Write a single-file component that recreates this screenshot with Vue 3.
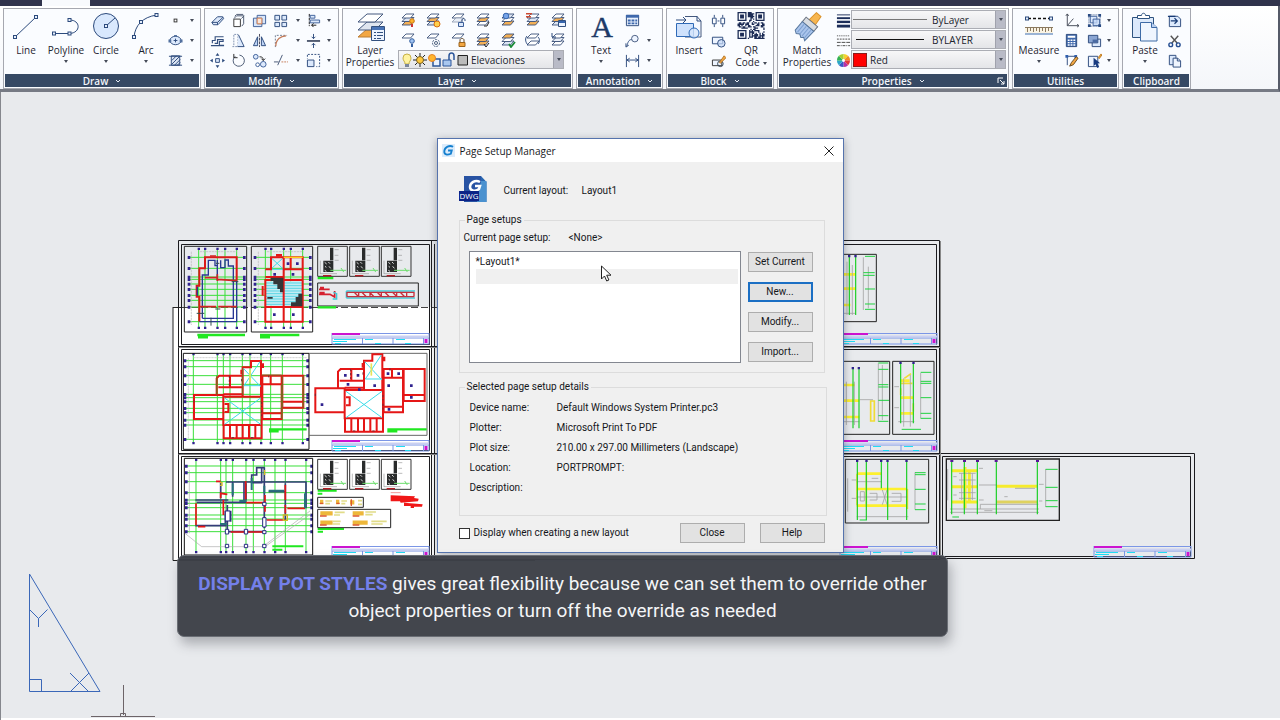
<script setup>
import { ref } from 'vue'

const N = 'stroke="#2c4a7c" fill="none"'
const sq = (x, y) => `<rect x="${x - 1.5}" y="${y - 1.5}" width="3" height="3" fill="#e6effc" stroke="#2c4a7c"/>`
const sheet = (y, fill, s = '#3a5078') => `<path d="M2 ${y + 4}L6 ${y}H14L10.500 ${y + 4}Z" fill="${fill}" stroke="${s}" stroke-width=".9"/>`
const stack = (a, b, c) => sheet(9, c) + sheet(5.5, b) + sheet(2, a)

const qr = (() => {
  let d = ''
  const finder = (x, y) => `M${x} ${y}h7v7h-7zM${x + 1} ${y + 1}v5h5v-5zM${x + 2} ${y + 2}h3v3h-3z`
  for (let y = 0; y < 21; y++) for (let x = 0; x < 21; x++) {
    const inFinder = (x < 8 && y < 8) || (x > 12 && y < 8) || (x < 8 && y > 12)
    if (!inFinder && (x * 7 + y * 11 + ((x * y) % 5) * 3 + (x ^ y)) % 7 < 4) d += `M${x} ${y}h1v1h-1z`
  }
  return `<g transform="translate(1.500 0) scale(1.290)"><path fill="#1c2c55" fill-rule="evenodd" d="${d}${finder(0, 0)}${finder(14, 0)}${finder(0, 14)}"/></g>`
})()

const icons = {
  line: `<path d="M4 25L25 5" ${N}/>${sq(4, 25)}${sq(25, 5)}`,
  polyline: `<path d="M3 21.500H18.500C30 21 30 8 18.500 8" ${N}/>${sq(3, 21.5)}${sq(18.5, 21.5)}${sq(18.5, 8)}`,
  circle: `<circle cx="15" cy="14" r="12.500" fill="#d9e8fd" stroke="#2c4a7c"/><path d="M15 14L24 6" ${N}/>${sq(15, 14)}`,
  arc: `<path d="M3 25C4 14 11 5 26 3" ${N}/>${sq(3, 25)}${sq(10, 10)}${sq(25.5, 3)}`,
  point: `<rect x="6.500" y="6.500" width="3" height="3" fill="#fff" stroke="#333"/>`,
  ellipse: `<ellipse cx="8" cy="8" rx="6" ry="4.500" fill="#dce9fc" stroke="#2c4a7c"/><path d="M8 6v4M6 8h4" ${N}/><path d="M.5 7h3v3h-3zM12.500 7h3v3h-3zM6.500 2h3v2h-3z" fill="#53719f"/>`,
  hatch: `<path d="M3.500 3h9v10h-9z" fill="#dce5f4" stroke="#2c4a7c"/><path d="M4 8l5-5M4 12l9-9M7 13l6-6M10 13l3-3M1 3.500h14M1 13h14" ${N}/>`,
  eraser: `<path d="M2 10L8 4h5.500l1 2-6 6.500H3.500z" fill="#dce8fa" stroke="#2c4a7c"/><path d="M2 10h6L14 4.500M8 10v2.500" ${N}/>`,
  copy3d: `<path d="M3 6.500h7v8H3z" fill="#fff" stroke="#333"/><path d="M3 6l3-3h8l-3 3M13.500 3.500v8l-2 2.500M4 3.500l2-2h7" stroke="#4b5870" fill="none"/>`,
  overlap: `<path d="M5.500 2.500h9v9h-9zM1.500 5.500h9v9h-9z" fill="#c9dbf7" fill-opacity=".7" stroke="#3d5f99"/><path d="M5.500 5.500h5v6h-5z" fill="#f8e8de" stroke="#d9804d"/>`,
  array: `<path d="M2 2.500h5v5H2zM9.500 2.500h5v5h-5zM2 10h5v4.500H2zM9.500 10h5v4.500h-5z" fill="#dce9fc" stroke="#2c4a7c"/>`,
  align: `<path d="M3.500 1v13" stroke="#111" stroke-dasharray="3 1"/><path d="M4.500 2.500h5v3h-5zM4.500 7.500h10v3h-10z" fill="#dce9fc" stroke="#3d5f99"/><path d="M6 13h5M8 11l-2 2 2 2" stroke="#111" fill="none"/>`,
  offset: `<path d="M1 13.500h14M2.500 11v-3h3v-4h9M5 11h3V7h6v2h-4v4h5" fill="none" stroke="#344f7e" stroke-width="1.200"/>`,
  stretch: `<path d="M3 2v12M1.500 14.500h6v-13h-5" fill="none" stroke="#7d8faf" stroke-dasharray="2 1"/><path d="M8 2l6 12.500H7" fill="#dce9fc" stroke="#2c4a7c"/>`,
  mirror: `<path d="M8 1v14" stroke="#445" stroke-dasharray="3 1"/><path d="M6 4v9.500H1.500zM10 4v9.500h4.500z" fill="#bed4f6" stroke="#2c4a7c"/>`,
  fillet: `<path d="M2.500 15V2.500H15" stroke="#69758c" stroke-dasharray="2 1.500" fill="none"/><path d="M3 14C3 7 8 3 14 3" stroke="#c57b58" fill="none" stroke-width="1.300"/>`,
  breakp: `<path d="M1 8.500h14" stroke="#15233f" stroke-width="1.500"/><path d="M8 1v5M8 11v5M6 4l2 2 2-2M6 13l2-2 2 2" ${N}/>`,
  move: `<path d="M6 6h4v4H6z" fill="#dce9fc" stroke="#2c4a7c"/><path d="M8 0l2 3H6zM8 16l2-3H6zM0 8l3-2v4zM16 8l-3-2v4z" fill="#2c4a7c"/>`,
  rotate: `<path d="M4.500 3.500A6 6 0 1 0 9 2.200" stroke="#46556f" fill="none"/><path d="M3 1v4h4" stroke="#222" fill="none"/>`,
  transform: `<circle cx="4" cy="4" r="2.500" fill="#dce9fc" stroke="#3d5f99"/><circle cx="12" cy="12" r="3" fill="#dce9fc" stroke="#3d5f99"/><circle cx="6" cy="12.500" r="2" fill="#fff" stroke="#3d5f99"/><path d="M8 4c3 0 4 1 4 4M10 6l2 2 2-2" fill="none" stroke="#222"/>`,
  trim: `<path d="M1 9.500h5M5 13l5-11" stroke="#445574" fill="none"/><path d="M9 9.500h7" stroke="#c57b58" stroke-dasharray="2 1"/>`,
  scale: `<path d="M2 1.500h12.500v13H11M1.500 2v4" fill="none" stroke="#2c4a7c" stroke-dasharray="2 1.500"/><path d="M1.500 7.500h7v7h-7z" fill="#dce9fc" stroke="#2c4a7c"/>`,
  layers: `<path d="M3 25L12 17H28L20 25Z" fill="#f3a743" stroke="#ba7c35"/><path d="M3 18L12 10H28L20 18Z" fill="#dfe5ef" stroke="#44597e"/><path d="M3 10L12 2H28L20 10Z" fill="#fff" stroke="#44597e"/><path d="M16.500 14.500h13v14h-13z" fill="#edf4ff" stroke="#34517f"/><path d="M17 15h12v3H17z" fill="#4974b7"/><path d="M19 20.500h2m1 0h6M19 23.500h2m1 0h6M19 26.500h2m1 0h4" stroke="#34517f"/>`,
  l1: stack('#fff', '#dce5f4', '#f3b057') + `<circle cx="12" cy="9" r="2.300" fill="#ffb32b" stroke="#c77712"/><path d="M11 12h2v3h-2z" fill="#c33"/>`,
  l2: stack('#fff', '#f3b057', '#dce5f4') + `<circle cx="12" cy="12" r="3" fill="#ffd14c" stroke="#d56c12"/>`,
  l3: sheet(2, '#fff') + sheet(6, '#e9eff8', '#96a2b5') + `<path d="M8.500 10.500h5v4h-5z" fill="#dce9fc" stroke="#3d5f99"/><path d="M12 10V8c0-2 3-2 3 0v1" ${N}/>`,
  l4: stack('#fff', '#f3b057', '#fff') + `<path d="M9 14h3l2-4" stroke="#222" fill="none"/>`,
  l5: stack('#dce5f4', '#fff', '#f3b057') + `<circle cx="6" cy="4" r="2.800" fill="#76a3e7" stroke="#3566b0"/>`,
  l6: stack('#fff', '#dce5f4', '#f3b057') + `<path d="M1 1h6v1.500H1zM1 4h5v1.500H1z" fill="#cc4a32"/>`,
  l7: stack('#fff', '#f3b057', '#dce5f4') + `<path d="M8.500 8.500h7v6h-7z" fill="#edf4ff" stroke="#34517f"/><path d="M9 9h6v2H9z" fill="#3867af"/>`,
  l8: sheet(2, '#fff') + `<circle cx="12" cy="9" r="2.300" fill="#9fc3f3" stroke="#345f9f"/><path d="M11 12h2v3h-2z" fill="#345f9f"/>`,
  l9: sheet(2, '#fff') + `<circle cx="11" cy="11" r="3.500" fill="none" stroke="#4c607e" stroke-dasharray="2 1"/><circle cx="11" cy="11" r="1.500" fill="#fff" stroke="#4c607e"/>`,
  l10: sheet(2, '#fff') + `<path d="M9 10.500h6v4H9z" fill="#f3a743" stroke="#9c651d"/><path d="M10 10V8c0-2 4-2 4 0v2" stroke="#644b2c" fill="none"/>`,
  l11: stack('#fff', '#f3b057', '#f3b057') + `<path d="M9 12l2 3 3-4" stroke="#222" fill="none"/>`,
  l12: stack('#f3b057', '#fff', '#dce5f4') + `<path d="M9 12l2 3 4-5" stroke="#198a37" fill="none" stroke-width="1.800"/>`,
  l13: sheet(2, '#fff') + sheet(9, '#fff') + `<path d="M2 4C0 6 0 10 3 13M13 5c2 2 2 5 0 7" ${N}/>`,
  l14: stack('#fff', '#e9eff8', '#fff') + `<path d="M2 1v4h4" ${N}/>`,
  text: `<text x="16" y="25" text-anchor="middle" font-family="Liberation Serif, serif" font-size="30" fill="#1d3a68" stroke="#1d3a68" stroke-width=".4">A</text>`,
  table: `<path d="M1.500 2.500h13v11h-13z" fill="#e9f1fd" stroke="#2c4a7c"/><path d="M1 2h14v3H1z" fill="#3e68ac"/><path d="M3 7h3v2H3zM7 7h3v2H7zM11 7h2v2h-2zM3 10h3v2H3zM7 10h3v2H7zM11 10h2v2h-2z" fill="#3e68ac"/>`,
  leader: `<circle cx="10.500" cy="6" r="3.500" fill="#edf4ff" stroke="#44597e"/><path d="M7 7C4 7 3 10 2 14M1 11v4l3-2" ${N}/>`,
  dim: `<path d="M1.500 2v13M14.500 2v13M2 7.500h12M5 5.500l-3 2 3 2M11 5.500l3 2-3 2" ${N}/>`,
  insert: `<path d="M11 4.500H23L27 9V25H11" fill="#f7faff" stroke="#44597e"/><path d="M23 4v5h4M2 8h10M9 5l3 3-3 3" ${N}/><path d="M2.500 11.500h17v13h-17z" fill="#bfd8fb" fill-opacity=".75" stroke="#2f6ab7"/><circle cx="20" cy="21" r="5" fill="#d6e6fb" fill-opacity=".8" stroke="#2f6ab7"/>`,
  b1: `<path d="M1.500 5.500h4v6h-4zM10.500 5.500h4v6h-4zM3.500 2v3M3.500 12v3M12.500 2v3M12.500 12v3M7 8.500h2" ${N}/>`,
  b2: `<path d="M1.500 4.500h11v7h-11z" fill="#edf4ff" stroke="#2c4a7c"/><circle cx="11" cy="11" r="4" fill="#c4d9f7" fill-opacity=".7" stroke="#2c4a7c"/>`,
  b3: `<path d="M1.500 7.500h10v6h-10z" fill="#edf4ff" stroke="#333"/><circle cx="10" cy="11.500" r="3" fill="none" stroke="#345"/><path d="M9 10l5-7 2 2-6 6z" fill="#f3a743" stroke="#b27424"/>`,
  qr,
  match: `<g transform="rotate(40 15 15)"><path d="M13-2h6l1 10h-8z" fill="#f7b650" stroke="#db9228"/><path d="M8 8h15v6H8z" fill="#d8dce1" stroke="#68717f"/><path d="M8 14h15l-1 13-3-2-2 2-3-2-3 2-3-2z" fill="#aac5ec" stroke="#56779f"/><path d="M11 15v10M14 15v10M17 15v10M20 15v10" stroke="#7d9fd0"/></g>`,
  lw: `<path d="M1 2h14" stroke="#1c2e5a"/><path d="M1 5.500h14" stroke="#1c2e5a" stroke-width="2"/><path d="M1 9.500h14" stroke="#1c2e5a" stroke-width="2.500"/><path d="M1 14h14" stroke="#1c2e5a" stroke-width="3"/>`,
  lt: `<path d="M1 3h14" stroke="#444" stroke-dasharray="1 1"/><path d="M1 6.500h14" stroke="#444" stroke-dasharray="2 1"/><path d="M1 10h14" stroke="#444" stroke-dasharray="4 1"/><path d="M1 13.500h14" stroke="#444" stroke-dasharray="3 1 1 1"/>`,
  wheel: ['#f5d22b', '#f08a24', '#e43a3a', '#b831a5', '#3c55c6', '#2aa6c9', '#33b253', '#a6cf32'].map((c, i) => `<path d="M8 8V1A7 7 0 0 1 12.950 3.050Z" fill="${c}" transform="rotate(${i * 45} 8 8)"/>`).join('') + '<circle cx="8" cy="8" r="1.500" fill="#fff"/>',
  measure: `<path d="M4 6.500h22" stroke="#111" stroke-width="1.500" stroke-dasharray="3 2"/>${sq(3, 6.5)}${sq(27, 6.5)}<path d="M1 15.500h28v6H1z" fill="#fbf4e4"/><path d="M1 15.500h28M3.500 16v4M6.500 16v3M9.500 16v4M12.500 16v3M15.500 16v4M18.500 16v3M21.500 16v4M24.500 16v3M27.500 16v4" stroke="#8b7a60"/><path d="M1 22h28" stroke="#7b9cc9" stroke-width="1.500"/>`,
  ucs: `<path d="M3.500 1v12.500H16M3.500 13.500L10 6M2 3l1.500-2L5 3M14 12l2 1.500-2 1.500" stroke="#444b58" fill="none"/>`,
  calc: `<path d="M2.500 1.500h11v13h-11z" fill="#3e68ac" stroke="#2c4a7c"/><path d="M4 3h8v2H4zM4 7h2v1.500H4zM7 7h2v1.500H7zM10 7h2v1.500h-2zM4 9.500h2V11H4zM7 9.500h2V11H7zM10 9.500h2V11h-2zM4 12h2v1.500H4zM7 12h2v1.500H7zM10 12h2v1.500h-2z" fill="#fff"/>`,
  ptstyle: `<path d="M3 3.500h10M3.500 4v9" stroke="#2c4a7c"/><path d="M1.500 2h3v3h-3zM11 2h3v3h-3z" fill="#2f5fae"/><path d="M6 14l2-4 5-6 2 1.500-5 7z" fill="#f3a743" stroke="#62451e"/>`,
  group: `<path d="M3.500 3.500h7v7h-7z" fill="#dce9fc" stroke="#3d5f99"/><path d="M6.500 6.500h7v7h-7z" fill="#c2d6f5" fill-opacity=".8" stroke="#3d5f99"/><path d="M1 1h3v3H1zM12 1h3v3h-3zM1 12h3v3H1zM12 12h3v3h-3z" fill="#294b83"/><path d="M4 2h8M2 4v8M14 4v8M4 14h8" stroke="#294b83" stroke-dasharray="1 1"/>`,
  front: `<path d="M5.500 6.500h9v8h-9z" fill="#dce9fc" stroke="#2c4a7c"/><path d="M1.500 2.500h10v8h-10z" fill="#8ba6d3" stroke="#2c4a7c"/><path d="M6 7h5v3H6z" fill="#4a6aa3"/>`,
  select: `<path d="M1.500 3.500h10v11h-10z" fill="#edf4ff" stroke="#2c4a7c"/><path d="M7 5v9l2-2 2 4 2-1-2-4h3z" fill="#173a80"/><path d="M12 5l3-4 1 1-3 4z" fill="#f4b032" stroke="#bd7722"/>`,
  paste: `<path d="M2.500 5.500h21v20h-21z" fill="#dce9fb" stroke="#2f5480"/><path d="M7.500 6.500v-3h4c0-3 4-3 4 0h4v3z" fill="#fff" stroke="#2f5480"/><path d="M10.500 10.500h11l5.500 5v13.500H10.500z" fill="#eff5fe" stroke="#3d6aa6"/><path d="M21.500 10.500v5H27" fill="#bad0f1" stroke="#3d6aa6"/>`,
  pastesp: `<path d="M2.500 3.500h9l3 3v8h-12z" fill="#dce9fc" stroke="#2c4a7c"/><path d="M1 3.500h8M4 8.500h7M8 5.500l3 3-3 3" stroke="#163a75" fill="none" stroke-width="1.300"/>`,
  cut: `<path d="M4 3l7 8M12 3l-7 8" stroke="#555" stroke-width="1.500"/><circle cx="4" cy="12.500" r="2" fill="none" stroke="#244d91" stroke-width="1.500"/><circle cx="12" cy="12.500" r="2" fill="none" stroke="#244d91" stroke-width="1.500"/>`,
  copy: `<path d="M2.500 2.500h7v10h-7z" fill="#dce9fc" stroke="#2c4a7c"/><path d="M6.500 5.500h5l3 3v6.500h-8z" fill="#eff5fe" stroke="#2c4a7c"/><path d="M11 5.500v3h3" ${N}/>`
}

const big = (icon, label, w, extra = {}) => ({ type: 'big', icon, lines: label.split('|'), w, ...extra })
const col = (w, ...names) => ({ type: 'col', w, names })
const drop = (w, ...names) => ({ type: 'drop', w, names })

const groups = [
  { id: 'draw', title: 'Draw', more: true, items: [big('line', 'Line', 'w40'), big('polyline', 'Polyline', 'w40', { arrow: 1 }), big('circle', 'Circle', 'w40', { arrow: 1 }), big('arc', 'Arc', 'w40', { arrow: 1 }), col('w18', 'point', 'ellipse', 'hatch'), drop('w16', 1, 1, 1)] },
  { id: 'modify', title: 'Modify', more: true, items: [col('w21', 'eraser', 'offset', 'move'), col('w21', 'copy3d', 'stretch', 'rotate'), col('w21', 'overlap', 'mirror', 'transform'), col('w21', 'array', 'fillet', 'trim'), drop('w13', 1, 1, 1), col('w18', 'align', 'breakp', 'scale'), drop('w13', 1, 1, 1)] },
  { id: 'layer', title: 'Layer', more: true, items: [big('layers', 'Layer|Properties', 'w50'), { type: 'layerTools' }] },
  { id: 'annotation', title: 'Annotation', more: true, items: [big('text', 'Text', 'w46', { arrow: 1 }), col('w16', 'table', 'leader', 'dim'), drop('w18', 0, 1, 1)] },
  { id: 'block', title: 'Block', more: true, items: [big('insert', 'Insert', 'w42'), col('w16', 'b1', 'b2', 'b3'), big('qr', 'QR|Code', 'w50', { inline: 1 })] },
  { id: 'properties', title: 'Properties', more: true, launcher: true, items: [big('match', 'Match|Properties', 'w56'), col('w16', 'lw', 'lt', 'wheel'), { type: 'props' }] },
  { id: 'utilities', title: 'Utilities', items: [big('measure', 'Measure', 'w50', { arrow: 1 }), col('w13', 'ucs', 'calc', 'ptstyle'), col('w28', 'group', 'front', 'select'), drop('w8', 1, 1, 1)] },
  { id: 'clipboard', title: 'Clipboard', items: [big('paste', 'Paste', 'w42', { arrow: 1 }), col('w16', 'pastesp', 'cut', 'copy')] }
]
const layerRows = [['l1', 'l2', 'l3', 'l4', 'l5', 'l6', 'l7'], ['l8', 'l9', 'l10', 'l11', 'l12', 'l13', 'l14']]

const plans = [
  { at: [170, 235], xs: [86, 105, 142, 165, 200], ys: [67, 100, 126, 133, 147, 163, 181, 196, 216, 260], x: [57, 222], y: [42, 278] },
  { at: [170, 235], xs: [286, 303, 341, 362, 398], ys: [67, 100, 126, 133, 147, 163, 181, 196, 216, 260], x: [255, 420], y: [42, 278] },
  { at: [170, 345], xs: [70, 142, 160, 180, 217, 240, 273, 302, 337, 398], ys: [47, 65, 92, 118, 148, 158, 170, 190, 203, 225, 240, 283], x: [45, 412], y: [28, 294] },
  { at: [170, 450], xs: [78, 152, 168, 188, 228, 250, 283, 315, 346, 408], ys: [48, 68, 95, 128, 150, 160, 173, 195, 207, 227, 245], x: [49, 424], y: [30, 306] }
]
const gridPath = p => p.xs.map(x => `M${x} ${p.y[0]}V${p.y[1]}`).join('') + p.ys.map(y => `M${p.x[0]} ${y}H${p.x[1]}`).join('')
const dotPath = p => p.xs.map(x => `M${x - 3} ${p.y[0] - 4}h7v7h-7zM${x - 3} ${p.y[1] - 3}h7v7h-7z`).join('') + p.ys.map(y => `M${p.x[0] - 4} ${y - 4}h8v9h-8zM${p.x[1] - 3} ${y - 4}h8v9h-8z`).join('')
const at = (x, y) => `translate(${x} ${y}) scale(.33333)`
const titleBlocks = [[332, 333], [332, 440], [332, 546], [840, 333], [840, 440], [840, 546], [1094, 546]]

const details = [
  ['Device name:', 'Default Windows System Printer.pc3'],
  ['Plotter:', 'Microsoft Print To PDF'],
  ['Plot size:', '210.00 x 297.00 Millimeters (Landscape)'],
  ['Location:', 'PORTPROMPT:'],
  ['Description:', '']
]
const showOnNew = ref(false)
</script>

<template>
  <div class="app">
    <div class="tabs"><span class="tab"></span></div>
    <header class="ribbon">
      <section v-for="g in groups" :key="g.id" class="group" :class="g.id">
        <div class="tools">
          <template v-for="(it, i) in g.items" :key="i">
            <button v-if="it.type === 'big'" class="big" :class="it.w">
              <svg viewBox="0 0 30 30" v-html="icons[it.icon]"></svg>
              <span v-for="l in it.lines" :key="l" class="label">{{ l }}<i v-if="it.inline && l === 'Code'" class="tri side"></i></span>
              <i v-if="it.arrow" class="tri under"></i>
            </button>
            <div v-else-if="it.type === 'col'" class="col" :class="it.w">
              <button v-for="n in it.names" :key="n" :aria-label="n"><svg viewBox="0 0 16 16" v-html="icons[n]"></svg></button>
            </div>
            <div v-else-if="it.type === 'drop'" class="col" :class="it.w">
              <template v-for="(n, k) in it.names" :key="k">
                <button v-if="n" aria-label="More"><i class="tri"></i></button>
                <span v-else></span>
              </template>
            </div>
            <div v-else-if="it.type === 'layerTools'" class="layer-tools">
              <div v-for="(r, k) in layerRows" :key="k" class="layer-row">
                <button v-for="n in r" :key="n" :aria-label="n"><svg viewBox="0 0 16 16" v-html="icons[n]"></svg></button>
              </div>
              <div class="combo layer-combo">
                <svg class="states" viewBox="0 0 68 16" aria-hidden="true">
                  <path d="M5 12C5 9 3 9 3 6a4 4 0 0 1 8 0c0 3-2 3-2 6z" fill="#fff3a0" stroke="#c7b146" /><path d="M5 12h4v3H5z" fill="#7b869b" />
                  <path d="M20 1v14M13 8h14M15 3l10 10M25 3L15 13" stroke="#222" /><circle cx="20" cy="8" r="3.500" fill="#ffc83d" stroke="#7c6422" />
                  <path d="M33 7h7v7h-7z" fill="#e9f2ff" stroke="#2d579b" stroke-width="1.500" /><circle cx="32" cy="6" r="3.500" fill="#ffb52d" stroke="#e78322" />
                  <path d="M43 8h8v6h-8z" fill="#a9c7ef" stroke="#2d579b" /><path d="M49 8V4c0-4 5-4 5 0v4" fill="none" stroke="#2d579b" stroke-width="1.500" />
                  <path d="M58 3.500h9.500v9.500H58z" fill="#bbb" stroke="#222" />
                </svg>
                <select aria-label="Current layer"><option>Elevaciones</option></select>
                <span class="knob"><i class="tri"></i></span>
              </div>
            </div>
            <div v-else class="props">
              <div class="combo"><i class="rule thin"></i><select aria-label="Lineweight"><option>ByLayer</option></select><span class="knob"><i class="tri"></i></span></div>
              <div class="combo"><i class="rule"></i><select aria-label="Linetype"><option>BYLAYER</option></select><span class="knob"><i class="tri"></i></span></div>
              <div class="combo"><i class="swatch"></i><select aria-label="Color"><option>Red</option></select><span class="knob"><i class="tri"></i></span></div>
            </div>
          </template>
        </div>
        <h2 class="title">
          <span>{{ g.title }}</span>
          <svg v-if="g.more" class="chev" viewBox="0 0 6 6"><path d="M1 2l2 2 2-2" /></svg>
          <svg v-if="g.launcher" class="launch" viewBox="0 0 8 8"><path d="M1 6V1h5M3 3l4 4M7 4v3H4" /></svg>
        </h2>
      </section>
    </header>

    <main class="workspace">
      <svg class="drawing" viewBox="0 92 1280 628" preserveAspectRatio="xMinYMin meet" fill="none">
        <defs>
          <g id="titleblock">
            <path d="M0 .5H97M0 5H97M0 11H97M0 0V11M30.500 5V11M61 5V11M91.500 5V11M97 0V11" stroke="#7b96e6" stroke-width="1" />
            <path d="M0 3.500H97" stroke="#c9d0f2" stroke-width="2" />
            <path d="M0 1H28" stroke="#cc14d0" stroke-width="2" /><path d="M94 6v4" stroke="#cc14d0" stroke-width="3" />
            <path d="M2 6.500h22M1 8.500h14M3 10.500h6M33 6.500h8M64 6.500h9M43 10.500h6M73 10.500h6" stroke="#20dcf4" stroke-width="1.200" />
          </g>
          <g id="detail">
            <path d="M0 0h89v90H0z" stroke="#333" stroke-width="3" />
            <path d="M37 4h10v38h-10zM17 43h30v34H17z" fill="#292b2b" />
            <path d="M21 48l6 5m5-6l5 5m-15 8l4 3m8-3l5 6m-18 6l5 3" stroke="#ddd" stroke-width="3" />
            <path d="M51 10h12M51 27h11M51 42h12M8 82h50M8 43v40" stroke="#999" stroke-width="2" />
            <path d="M38 72h47M70 65l8 12" stroke="#6cdd6c" stroke-width="3" /><path d="M16 88h25" stroke="#b51b22" stroke-width="4" />
          </g>
          <g id="house" stroke-width="6">
            <path stroke="#e51616" d="M72 150H160V222H72ZM160 155H275V240H160ZM218 155V67H243V48H273V155M140 150V100L148 92H218M145 127H218M180 92V127M160 148H218M275 92H335V222H277V92M302 92V118M277 118H335M337 92H400V188H337V92M337 170H400M277 205H335M161 240V280H275V240M180 242V278M200 242V278M218 242V278M237 242V278M256 242V278M164 177h11v24h-11M214 74v14M279 55v14" />
            <path stroke="#702a36" stroke-width="3" d="M178 92v30M296 90v12M72 166v10M275 170v16M275 196v18M185 278h12M243 278h12M215 102v12" stroke-dasharray="7 5" />
            <path stroke="#3cdbe8" stroke-width="3" d="M164 159L272 238M272 159L164 238M220 70L272 125M270 50L222 122H272" />
            <path stroke="#e9e45a" stroke-width="5" d="M240 75V112" />
          </g>
        </defs>

        <path d="M173 307H540V560H173Z" fill="#fff" />
        <path d="M173 307V560.500H535M173 307.500H181" stroke="#222" />
        <path d="M181 307.500H437" stroke="#444" stroke-dasharray="7 3" />

        <g stroke="#1b1b1f">
          <path d="M178.500 240.500H939.500V559.500H178.500ZM178.500 346.500H940M178.500 453.500H1194.500V558.500H940M431.500 240V560M434.500 244V560" />
          <path d="M181.500 244.500H429.500V344.500H181.500ZM181.500 349.500H429.500V450.500H181.500ZM181.500 456.500H429.500V557H181.500ZM843 244.500H936.500V344.500M843 349.500H936.500V450.500M843 456.500H936.500V560M942.500 456.500H1190.500V556.500H942.500Z" />
          <path d="M178.500 347.500H940M178.500 454.500H940M940.500 241V560" stroke="#888" />
        </g>

        <g v-for="(p, i) in plans" :key="i" :transform="at(...p.at)">
          <path :d="gridPath(p)" stroke="#39df39" stroke-width="3" />
          <path :d="dotPath(p)" fill="#30238f" />
        </g>

        <g :transform="at(170, 235)">
          <path d="M43 34H230V291H43ZM244 34H428V291H244ZM443 144H745V213H443Z" stroke="#222" stroke-width="3" />
          <path d="M88 260V185H80V152H88V100H105V67H200V137" stroke="#db1919" stroke-width="6" />
          <path d="M200 137V260H88M97 250V120H115V76H135V92H142M142 75V135M152 76V98H165V75H175V93H190V250H97M82 155V182" stroke="#293894" stroke-width="4" />
          <path d="M105 128H140M142 118V138M120 63h18M142 133L200 137M88 215h50M145 215h55" stroke="#d12525" stroke-width="5" />
          <path d="M80 235h23M123 248v24M185 140h20M136 222h15M138 85h10" stroke="#334b51" stroke-width="3" />
          <path d="M64 50V270M265 50V270M90 50H200M290 50H400" stroke="#b6b6b6" stroke-width="2" stroke-dasharray="7 2" />
          <path d="M288 139H395V212H288Z" fill="#c2edf3" />
          <path d="M286 144H396M286 152H396M286 160H396M286 168H396M286 176H396M286 184H396M286 192H396M286 200H396M286 208H396" stroke="#26c8dd" stroke-width="2" />
          <path d="M302 67H341V103H302ZM302 67L341 103M341 67L302 103" stroke="#3cdbe8" stroke-width="3" />
          <path d="M286 103H303V67H398V260H286V135H398M341 70V258M286 216H398M341 103H398M362 67V103M286 126H341M278 153V182" stroke="#e51616" stroke-width="6" />
          <path d="M341 67H398" stroke="#ffd11b" stroke-width="4" /><path d="M318 61h18" stroke="#e51616" stroke-width="8" />
          <path d="M302 128h38v44h-10v-10h-8v-14h-12v-10h-8zM397 176v38h-34v-12h14v-16h8v-10zM292 186h16v5h-16z" fill="#333739" />
          <path d="M350 86h8M378 86h8M310 118h8M365 118h8M309 239h8M366 239h8" stroke="#30238f" stroke-width="8" />
          <path d="M82 300H225M84 307H114M270 300H388M270 307H300M443 129H490M443 217H498" stroke="#20e820" stroke-width="7" />
          <use href="#detail" x="443" y="34" /><use href="#detail" x="539" y="34" /><use href="#detail" x="634" y="34" />
          <path d="M447 163H479M447 178H480L494 186V168M450 158h12M448 173h16" stroke="#d5202f" stroke-width="5" />
          <path d="M490 172l10 4v16h-12M529 168H735M529 189H735M529 168V189" stroke="#40cbd9" stroke-width="4" />
          <path d="M531 172H732M531 185H732M531 171v14M552 171l14 14M575 171l14 14M598 171l14 14M621 171l14 14M644 171l14 14M667 171l14 14M690 171l14 14M732 171v14M566 171v14M600 171v14M634 171v14M680 171v14M710 171v14" stroke="#c52f3c" stroke-width="4" />
        </g>

        <g :transform="at(170, 345)">
          <path d="M40 25H417V313H40Z" stroke="#111" stroke-width="3" /><path d="M417 25H771V271H417" stroke="#666" stroke-width="3" />
          <path d="M55 40V285M70 38H410" stroke="#bbb" stroke-width="2" stroke-dasharray="7 2" />
          <use href="#house" /><use href="#house" x="364" y="-20" />
          <path d="M140 92V150M218 70V150M275 90H335M337 92V188M400 92V188M335 118V222" stroke="#756b22" stroke-width="3" />
          <path d="M522 91h8M560 91h8M530 118h8M564 134h8M610 122h8M650 86h8M682 86h8M652 122h8M720 122h8M720 157h8M452 179h8M653 193h8" stroke="#30238f" stroke-width="8" />
          <path d="M297 253H410M297 259H326M652 253H770M652 259H682" stroke="#20e820" stroke-width="7" />
        </g>

        <g :transform="at(170, 450)">
          <path d="M43 25H428V315H43Z" stroke="#111" stroke-width="3" />
          <path d="M45 250L95 290H285L425 190M285 285L420 183M58 60V250" stroke="#aaa" stroke-width="2" />
          <path d="M76 150H175M80 157H228M152 96V145M168 96H222V150M188 96V140M222 96H408V175M283 52V235M275 52V98H245V75H260V53H283M296 125H346M346 100V210M172 165V245H285M228 150V100M76 227H166V185H182V215" stroke="#343c78" stroke-width="5" />
          <path d="M78 160V226M152 145V130L172 133M160 150V195M227 93V148M228 158H283M290 210H346M352 175H405M182 246H225M232 246H283M346 105V150M346 165V190M285 135V185M138 94h14M84 230h22" stroke="#e51616" stroke-width="5" />
          <path d="M245 84V120M188 100V135M296 122H342M150 222h20M208 153h22M405 130V175M283 107V130" stroke="#28707d" stroke-width="6" />
          <path d="M340 195h12v16h-12zM150 98h6v8h-6M284 60v15" stroke="#d2ba28" stroke-width="4" />
          <path d="M166 183h14v30h-14zM166 238h10v14h-10zM223 238h10v14h-10zM278 242h10v9h-10zM278 203h10v28h-10zM278 157h10v10h-10zM166 283h10v10h-10zM223 283h10v10h-10zM278 283h10v10h-10z" stroke="#262b82" stroke-width="3" fill="#fff" />
          <path d="M307 289H400M307 299H337M443 122H500M443 131H457M443 237H522M443 245H459" stroke="#20e820" stroke-width="6" />
          <use href="#detail" x="443" y="28" /><use href="#detail" x="539" y="28" /><use href="#detail" x="634" y="28" />
          <path d="M443 142H580V172H443ZM443 178H662V233H443Z" stroke="#222" stroke-width="3" />
          <path d="M450 156h10M498 156h10M540 157h13M451 190h37M451 218h37M548 190h33M548 218h45" stroke="#edb73a" stroke-width="13" />
          <path d="M449 160h11M499 160h10M544 148v20M450 198h20M450 225h20M548 198h20M548 225h20" stroke="#db5832" stroke-width="4" />
          <path d="M466 153h20M466 161h14M514 153h17M514 161h12M564 152h12M564 163h12M494 187h30M492 195h18M488 214h24M488 222h22M586 186h32M586 194h22M604 214h46M604 222h34" stroke="#e1dc88" stroke-width="5" />
          <path d="M662 136l73 3-3 5 14 2-2 8-52 4-2-4h-28zM702 158l56 5-2 7h-24v4h-10v-6h-20z" fill="#f01717" /><path d="M662 128h30" stroke="#f19a9a" stroke-width="3" />
        </g>

        <g :transform="at(835, 235)">
          <path d="M20 58H124V260H20M20 379H164V598H20M173 379H297V598H173ZM31 673H281V864H31Z" stroke="#222" stroke-width="3" />
          <path d="M25 118H62M25 161H62M25 210H46M25 450H60M25 497H73M25 546H73M196 437h28M196 488h40M196 535h40M66 716H140M65 762H217M65 812H217" stroke="#fdf02e" stroke-width="8" />
          <path d="M107 558V498h11v60zM208 430l20-14M198 445h34M217 762v60M66 716v95M94 716v100M197 460v20M235 505v25M158 765v50" stroke="#f0dc34" stroke-width="5" />
          <path d="M36 80V240M52 90V240M85 67V225M25 235h38M100 95V220M34 440V570M58 440V570M130 385V560M74 494h40M25 560h48M142 390V555M257 414V550M206 430V575M226 420V575M178 455h14M178 518h14M190 560h48M38 730V830M50 735h14M50 790h14M65 740h75M65 786h152M65 845h155M240 712V824M76 770h12v28H76zM104 775h22v20H104M170 775h28v24H170M142 765l14 44M156 765l-14 44M110 730h20" stroke="#a5a5a5" stroke-width="2.500" />
          <path d="M43 65V240M62 65V240M54 400V580M72 400V580M197 384V565M235 384V565M67 678V855M94 678V855M139 678V760M158 678V855M215 678V855" stroke="#18ce23" stroke-width="3.500" />
          <path d="M90 64h30M85 113h34M85 121h34M90 162h30M90 207h30M90 223h30M130 384h30M130 403h30M130 449h30M130 456h30M130 496h32M130 542h30M130 559h30M257 412h32M257 439h32M257 445h32M257 488h32M257 535h32M257 550h32M200 583h58M240 713h32M240 719h32M240 763h32M240 807h32M240 824h32M74 855h22" stroke="#20d23f" stroke-width="3" />
          <path d="M39 60h7v7h-7zM58 60h7v7h-7zM50 396h7v7h-7zM68 396h7v7h-7zM193 380h7v7h-7zM232 380h7v7h-7zM63 674h7v7h-7zM91 674h7v7h-7zM135 674h7v7h-7zM154 674h7v7h-7zM211 674h7v7h-7z" fill="#30238f" />
        </g>

        <g :transform="at(935, 445)">
          <path d="M34 42H373V226H34Z" stroke="#222" stroke-width="4" />
          <path d="M50 77H128M50 125H128M50 171H128M184 124H307M90 66v124M103 80v88" stroke="#f6eb2c" stroke-width="9" /><path d="M184 171H307" stroke="#dfd25e" stroke-width="9" />
          <path d="M38 72V166M55 95h10M55 150h10M132 70h12M132 120h52M132 165h14M72 85h50M72 105h50M72 143h50M72 160h50M45 192H312M45 202H312M136 192V178H310M240 130h60M208 155h10M312 118h14M312 168h10M332 72V186M148 197h24M80 85V165M112 85V165" stroke="#a5a5a5" stroke-width="2.500" />
          <path d="M50 45V208M88 45V208M127 45V208M184 45V208M307 45V208" stroke="#18ce23" stroke-width="3.500" />
          <path d="M332 73h36M332 127h36M332 167h36M332 185h36M52 216h20" stroke="#20d23f" stroke-width="3" />
          <path d="M46 45h9v6h-9zM84 45h9v6h-9zM123 45h9v6h-9zM179 45h9v6h-9zM303 45h9v6h-9z" fill="#551998" />
        </g>

        <use v-for="(t, i) in titleBlocks" :key="'t' + i" href="#titleblock" :x="t[0]" :y="t[1]" />

        <g stroke="#3a67b8">
          <path d="M29.500 574V691.500H100ZM29.500 679.500H41.500V691M30 610l8.500 8.500 9-9M38.500 618.500V627M70 673l18 18M71 691l18-18" />
        </g>
        <path d="M123.500 685V715M91 716.500H155M120.500 713.500h5v3h-5z" stroke="#6d6468" />
        <path d="M0 719H1280" stroke="#fff" stroke-width="2" />
      </svg>

      <section class="dialog" role="dialog" aria-labelledby="dlg-title">
        <header class="dlg-head">
          <svg class="logo" viewBox="0 0 14 14"><path d="M12 3C8 1 3 3 2.500 7.500S6 12 9.500 10.500L10.500 7H6.500" /></svg>
          <h1 id="dlg-title">Page Setup Manager</h1>
          <button class="close" aria-label="Close window"><svg viewBox="0 0 10 10"><path d="M.5.5l9 9M9.500.5l-9 9" /></svg></button>
        </header>
        <div class="dlg-body">
          <div class="current">
            <svg class="dwg" viewBox="0 0 28 28">
              <path d="M5 1H22L27.500 7V27H5Z" fill="#2866b0" /><path d="M5 1H22V27H5Z" fill="#2853a3" /><path d="M22 6h5.500v21H18z" fill="#4a91cf" />
              <path d="M21 7C16 4 11 8 11 12s6 5 9 2l1-3h-5" fill="none" stroke="#fff" stroke-width="2.500" />
              <path d="M0 16H20V26H0Z" fill="#0c2386" /><text x="10" y="24" text-anchor="middle" font-family="Open Sans, sans-serif" font-size="8" fill="#fff">DWG</text>
            </svg>
            <span class="cur-label">Current layout:</span><span>Layout1</span>
          </div>
          <fieldset class="setups">
            <legend>Page setups</legend>
            <p class="cur-setup"><span>Current page setup:</span><span>&lt;None&gt;</span></p>
            <div class="setup-row">
              <ul class="list"><li>*Layout1*</li><li class="hover"></li></ul>
              <div class="actions">
                <button class="btn">Set Current</button>
                <button class="btn primary">New...</button>
                <button class="btn">Modify...</button>
                <button class="btn">Import...</button>
              </div>
            </div>
          </fieldset>
          <fieldset class="details">
            <legend>Selected page setup details</legend>
            <dl>
              <template v-for="d in details" :key="d[0]"><dt>{{ d[0] }}</dt><dd>{{ d[1] }}</dd></template>
            </dl>
          </fieldset>
          <footer class="dlg-foot">
            <label class="check"><input v-model="showOnNew" type="checkbox" />Display when creating a new layout</label>
            <button class="btn">Close</button>
            <button class="btn">Help</button>
          </footer>
        </div>
        <svg class="cursor" viewBox="0 0 12 18"><path d="M1.500 1v13l3-3 2.200 5 2.200-1-2.200-4.800H11z" fill="#fff" stroke="#222" /></svg>
      </section>

      <p class="caption"><strong>DISPLAY POT STYLES</strong> gives great flexibility because we can set them to override other object properties or turn off the override as needed</p>
    </main>
  </div>
</template>

<style>
body { margin: 0; background: #e8eaed; }
</style>

<style scoped>
.app { min-height: 100vh; display: flex; flex-direction: column; font-family: "Open Sans", "Noto Sans", sans-serif; font-size: 11px; color: #1e2430; overflow: hidden; }
.app * { box-sizing: border-box; }
button { border: 0; padding: 0; margin: 0; background: none; font: inherit; color: inherit; }
.tabs { height: 6px; background: #30334c; padding-left: 42px; }
.tab { display: block; width: 48px; height: 6px; background: #f8fafd; }
.ribbon { display: flex; gap: 3px; height: 86px; padding: 2px 3px 0; background: linear-gradient(#fff, #f4f6fa); border-right: 2px solid #555a68; border-bottom: 3px solid #767a84; }
.group { flex: none; display: flex; flex-direction: column; height: 81px; padding: 1px 1px 1px; border: 1px solid #a6a8b0; background: #fafcff; }
.draw { width: 198px; }
.modify { width: 135px; }
.layer { width: 231px; }
.annotation { width: 87px; }
.block { width: 108px; }
.properties { width: 232px; }
.utilities { width: 107px; }
.clipboard { width: 69px; }
.tools { flex: 1; display: flex; }
.draw .tools, .modify .tools, .layer .tools { padding-left: 1px; }
.utilities .tools .w28 { padding-left: 6px; }
.title { display: flex; flex: none; align-items: center; justify-content: center; gap: 7px; margin: 0; height: 13px; padding-top: 1px; background: #364964; color: #f2f5fa; font-size: 10px; font-weight: 600; line-height: 12px; position: relative; }
.chev { width: 6px; height: 6px; fill: none; stroke: #e8edf5; }
.launch { position: absolute; right: 2px; top: 3px; width: 8px; height: 8px; fill: none; stroke: #fff; }
.big { flex: none; display: flex; flex-direction: column; align-items: center; padding-top: 2px; }
.big svg { width: 30px; height: 30px; margin-bottom: 2px; overflow: visible; }
.label { font-size: 10px; line-height: 12px; white-space: nowrap; }
.w8 { width: 8px; } .w13 { width: 13px; } .w16 { width: 16px; } .w18 { width: 18px; } .w21 { width: 21px; } .w28 { width: 28px; }
.w40 { width: 40px; } .w42 { width: 42px; } .w46 { width: 46px; } .w50 { width: 50px; } .w56 { width: 56px; }
.col { flex: none; display: grid; grid-template-rows: repeat(3, 20px); }
.col button, .layer-row button { display: flex; align-items: center; justify-content: center; }
.col svg, .layer-row svg { width: 15px; height: 15px; flex: none; }
.layer-row svg { width: 16px; height: 16px; }
.tri { display: inline-block; width: 0; height: 0; border: 2px solid transparent; border-top: 3px solid #454b58; border-bottom: 0; }
.under { margin-top: 4px; }
.side { margin-left: 3px; vertical-align: middle; }
.layer-tools { width: 175px; }
.layer-row { display: grid; grid-template-columns: repeat(7, 25px); height: 20px; }
.combo { display: flex; align-items: center; height: 19px; background: linear-gradient(#f7f7f8, #e4e5e8); border: 1px solid #abadb4; }
.layer-combo { width: 166px; margin-left: 3px; }
.states { width: 68px; height: 16px; flex: none; margin: 0 3px 0 1px; }
.combo select { flex: 1; min-width: 0; appearance: none; border: 0; padding: 0; background: transparent; font: inherit; font-size: 10px; color: #20242d; height: 16px; }
.knob { display: flex; align-items: center; justify-content: center; width: 10px; height: 100%; background: #b9bbc7; border-left: 1px solid #a0a2ad; }
.props { width: 155px; display: grid; grid-template-rows: repeat(3, 19px); gap: 1px; }
.rule { flex: none; width: 68px; margin: 0 8px 0 4px; border-top: 1px solid #111; }
.thin { width: 74px; margin: 0 5px 0 1px; border-color: #777; }
.swatch { flex: none; width: 14px; height: 14px; margin: 0 3px 0 1px; background: #f00; border: 1px solid #8b1a1a; }

.workspace { flex: 1; position: relative; min-height: 628px; background: #e8eaed; border-left: 1px solid #85878d; overflow: hidden; }
.drawing { display: block; width: calc(100% + 1px); margin-left: -1px; }
.dialog { position: absolute; top: 46px; left: 50%; margin-left: -204px; width: 407px; background: #f0f0f0; border: 1px solid #5573ad; box-shadow: 0 2px 8px rgba(40, 45, 60, .4); font: 10px/12px "Roboto", "Liberation Sans", sans-serif; color: #15171b; }
.dlg-head { display: flex; align-items: center; height: 23px; padding: 0 8px 0 4px; background: #fff; }
.logo { width: 13px; height: 13px; background: #dcecfb; fill: none; stroke: #1680cf; stroke-width: 2; }
.dlg-head h1 { flex: 1; margin: 0 0 0 5px; font: 400 10px/14px "Open Sans", sans-serif; }
.close { width: 12px; height: 12px; }
.close svg { display: block; width: 10px; height: 10px; margin: 1px; fill: none; stroke: #222; }
.dlg-body { padding: 12px 16px 9px 21px; }
.current { display: flex; align-items: center; height: 30px; }
.current span { padding-top: 4px; }
.dwg { width: 28px; height: 28px; margin-right: 17px; }
.cur-label { width: 78px; }
fieldset { margin: 0; padding: 0; border: 1px solid #dcdcdc; min-width: 0; }
legend { margin-left: 5px; padding: 0 2px; }
.setups { margin-top: 10px; margin-right: 2px; height: 159px; }
.cur-setup { display: flex; margin: 6px 0 7px 4px; }
.cur-setup span:first-child { width: 105px; }
.setup-row { display: flex; padding-left: 9px; }
.list { width: 272px; height: 112px; margin: 0 7px 0 0; padding: 2px 2px 0 6px; list-style: none; background: #fff; border: 1px solid #838790; }
.list li { height: 15px; line-height: 15px; }
.list .hover { background: #f0f0f0; }
.actions { display: flex; flex-direction: column; gap: 10px; padding-top: 1px; }
.btn { width: 65px; height: 20px; border: 1px solid #adadad; background: #e2e2e2; text-align: center; line-height: 18px; }
.primary { border: 2px solid #1b6fc4; line-height: 16px; }
.details { margin-top: 8px; height: 135px; }
dl { display: grid; grid-template-columns: 87px 1fr; grid-auto-rows: 20px; margin: 5px 0 0 10px; line-height: 20px; }
dt, dd { margin: 0; }
.dlg-foot { display: flex; align-items: center; gap: 15px; margin: 7px 2px 0 0; }
.check { flex: 1; display: flex; align-items: center; gap: 4px; }
.check input { appearance: none; width: 11px; height: 11px; margin: 0; border: 1px solid #333; background: #fff; }
.check input:checked { background: #1b6fc4; }
.cursor { position: absolute; left: 162px; top: 126px; width: 12px; height: 18px; }
.caption { position: absolute; left: 176px; top: 463px; width: 771px; margin: 0; padding: 14px 15px 12px; border-radius: 7px; border: 1px solid #6a6e75; background: rgba(61, 64, 71, .97); box-shadow: 3px 7px 12px rgba(60, 64, 72, .35); color: #f4f5f7; text-align: center; font: 19px/27px "Roboto", sans-serif; }
.caption strong { color: #7480ea; font-weight: 700; }
</style>
